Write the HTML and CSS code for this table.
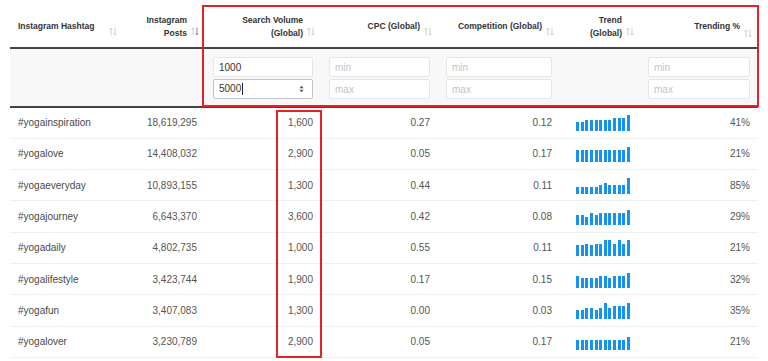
FILE: index.html
```html
<!DOCTYPE html>
<html lang="en">

<head>
    <meta charset="UTF-8" />
    <meta name="viewport" content="width=device-width, initial-scale=1.0" />
    <link rel="stylesheet" href="styles.css">
    <title>Instagram Hashtags</title>
</head>

<body>

    <div class="wrap">
        <table class="tbl">
            <colgroup>
                <col class="c-tag">
                <col class="c-posts">
                <col class="c-vol">
                <col class="c-cpc">
                <col class="c-comp">
                <col class="c-trend">
                <col class="c-pct">
            </colgroup>
            <thead>
                <tr class="head">
                    <th class="left">Instagram Hashtag<svg class="sort" viewBox="0 0 8 9"><path d="M2 8.5V1M0.5 2.5L2 1l1.5 1.5" /><path d="M6 0.5V8M4.5 6.5L6 8l1.5-1.5" /></svg></th>
                    <th>Instagram<br>Posts<svg class="sort desc" viewBox="0 0 8 9"><path d="M2 8.5V1M0.5 2.5L2 1l1.5 1.5" /><path class="on" d="M6 0.5V8M4.5 6.5L6 8l1.5-1.5" /></svg></th>
                    <th>Search Volume<br>(Global)<svg class="sort" viewBox="0 0 8 9"><path d="M2 8.5V1M0.5 2.5L2 1l1.5 1.5" /><path d="M6 0.5V8M4.5 6.5L6 8l1.5-1.5" /></svg></th>
                    <th>CPC (Global)<svg class="sort" viewBox="0 0 8 9"><path d="M2 8.5V1M0.5 2.5L2 1l1.5 1.5" /><path d="M6 0.5V8M4.5 6.5L6 8l1.5-1.5" /></svg></th>
                    <th>Competition (Global)<svg class="sort" viewBox="0 0 8 9"><path d="M2 8.5V1M0.5 2.5L2 1l1.5 1.5" /><path d="M6 0.5V8M4.5 6.5L6 8l1.5-1.5" /></svg></th>
                    <th>Trend<br>(Global)<svg class="sort" viewBox="0 0 8 9"><path d="M2 8.5V1M0.5 2.5L2 1l1.5 1.5" /><path d="M6 0.5V8M4.5 6.5L6 8l1.5-1.5" /></svg></th>
                    <th>Trending %<svg class="sort low" viewBox="0 0 8 9"><path d="M2 8.5V1M0.5 2.5L2 1l1.5 1.5" /><path d="M6 0.5V8M4.5 6.5L6 8l1.5-1.5" /></svg></th>
                </tr>
                <tr class="filters">
                    <td></td>
                    <td></td>
                    <td>
                        <input class="inp" value="1000">
                        <div class="inp focus">5000<span class="caret"></span>
                            <svg class="spin" viewBox="0 0 6 9"><path d="M0.5 3.5h5L3 0.5z" /><path d="M0.5 5.5h5L3 8.5z" /></svg>
                        </div>
                    </td>
                    <td><input class="inp" placeholder="min"><input class="inp" placeholder="max"></td>
                    <td><input class="inp" placeholder="min"><input class="inp" placeholder="max"></td>
                    <td></td>
                    <td><input class="inp" placeholder="min"><input class="inp" placeholder="max"></td>
                </tr>
            </thead>
            <tbody>
                <tr>
                    <td class="left">#yogainspiration</td>
                    <td>18,619,295</td>
                    <td>1,600</td>
                    <td>0.27</td>
                    <td>0.12</td>
                    <td class="trend"><div class="bars" data-h="9,9,11,11,11,11,11,11,13,13,13,16"></div></td>
                    <td>41%</td>
                </tr>
                <tr>
                    <td class="left">#yogalove</td>
                    <td>14,408,032</td>
                    <td>2,900</td>
                    <td>0.05</td>
                    <td>0.17</td>
                    <td class="trend"><div class="bars" data-h="12,12,12,12,12,12,12,12,12,12,12,15"></div></td>
                    <td>21%</td>
                </tr>
                <tr>
                    <td class="left">#yogaeveryday</td>
                    <td>10,893,155</td>
                    <td>1,300</td>
                    <td>0.44</td>
                    <td>0.11</td>
                    <td class="trend"><div class="bars" data-h="7,7,7,7,7,9,11,9,9,9,9,16"></div></td>
                    <td>85%</td>
                </tr>
                <tr>
                    <td class="left">#yogajourney</td>
                    <td>6,643,370</td>
                    <td>3,600</td>
                    <td>0.42</td>
                    <td>0.08</td>
                    <td class="trend"><div class="bars" data-h="10,10,8,12,10,12,12,12,12,12,12,15"></div></td>
                    <td>29%</td>
                </tr>
                <tr>
                    <td class="left">#yogadaily</td>
                    <td>4,802,735</td>
                    <td>1,000</td>
                    <td>0.55</td>
                    <td>0.11</td>
                    <td class="trend"><div class="bars" data-h="11,11,12,11,12,12,16,16,12,16,12,16"></div></td>
                    <td>21%</td>
                </tr>
                <tr>
                    <td class="left">#yogalifestyle</td>
                    <td>3,423,744</td>
                    <td>1,900</td>
                    <td>0.17</td>
                    <td>0.15</td>
                    <td class="trend"><div class="bars" data-h="12,10,10,10,10,12,12,10,12,12,12,15"></div></td>
                    <td>32%</td>
                </tr>
                <tr>
                    <td class="left">#yogafun</td>
                    <td>3,407,083</td>
                    <td>1,300</td>
                    <td>0.00</td>
                    <td>0.03</td>
                    <td class="trend"><div class="bars" data-h="9,9,11,11,9,11,16,11,13,13,13,16"></div></td>
                    <td>35%</td>
                </tr>
                <tr>
                    <td class="left">#yogalover</td>
                    <td>3,230,789</td>
                    <td>2,900</td>
                    <td>0.05</td>
                    <td>0.17</td>
                    <td class="trend"><div class="bars" data-h="10,10,10,10,10,10,10,10,10,10,10,13"></div></td>
                    <td>21%</td>
                </tr>
            </tbody>
        </table>

        <!-- red highlight boxes drawn over the table -->
        <div class="mark mark-filters"></div>
        <div class="mark mark-volume"></div>
    </div>

    <script>
        // build the little trend bar charts from the data-h lists
        document.querySelectorAll('.bars').forEach(box => {
            box.dataset.h.split(',').forEach(h => {
                const bar = document.createElement('span')
                bar.className = 'bar'
                bar.style.height = h + 'px'
                box.appendChild(bar)
            })
        })
    </script>

</body>

</html>
```

FILE: styles.css
```css
:root {
    --mark: #e5222a;
    --line-dark: #444;
    --line-light: #f0f0f0;
    --bar: #1592f2;
}

* {
    box-sizing: border-box;
}

body {
    margin: 0;
    background-color: #fff;
    font-family: 'Liberation Sans', Arial, sans-serif;
    color: #555;
}

.wrap {
    position: relative;
    /*so the red boxes can sit on top of the table*/
    padding: 0 10px;
}

.tbl {
    border-collapse: collapse;
    table-layout: fixed;
    width: 748px;
}

.c-tag { width: 113px; }
.c-posts { width: 82px; }
.c-vol { width: 116px; }
.c-cpc { width: 117px; }
.c-comp { width: 122px; }
.c-trend { width: 80px; }
.c-pct { width: 118px; }

/* header */
.head th {
    position: relative;
    height: 48px;
    padding: 12px 18px 6px 8px;
    text-align: right;
    vertical-align: middle;
    font-size: 8.5px;
    line-height: 13px;
    font-weight: bold;
    color: #333;
    border-bottom: 2px solid var(--line-dark);
}

.head th.left {
    text-align: left;
}

.sort {
    position: absolute;
    right: 6px;
    bottom: 11px;
    width: 8px;
    height: 9px;
    fill: none;
    stroke: #cfcfcf;
    stroke-width: 1;
}

.sort.low {
    bottom: 9px;
}

.sort .on {
    stroke: #888;
}

/* filter row */
.filters td {
    background-color: #f8f8f8;
    padding: 8px 8px 7px;
    border-bottom: 2px solid var(--line-dark);
    height: 57px;
    vertical-align: top;
}

.inp {
    display: block;
    width: 100%;
    height: 20px;
    margin: 0;
    padding: 0 5px;
    border: 1px solid #e6e6e6;
    border-radius: 2px;
    background-color: #fff;
    font-family: inherit;
    font-size: 10px;
    color: #333;
    outline: 0;
}

.inp + .inp {
    margin-top: 2px;
}

.inp::placeholder {
    color: #c4c4c4;
}

div.inp {
    display: flex;
    align-items: center;
    line-height: 18px;
}

.inp.focus {
    border-color: #c4c4c4;
}

.caret {
    width: 1px;
    height: 12px;
    background-color: #222;
    margin-left: 1px;
}

.spin {
    width: 5px;
    height: 8px;
    margin-left: auto;
    margin-right: 3px;
    fill: #555;
}

/* body rows */
tbody td {
    height: 31.3px;
    padding: 0 8px;
    text-align: right;
    font-size: 10px;
    color: #555;
    border-bottom: 1px solid var(--line-light);
    white-space: nowrap;
}

tbody td.left {
    text-align: left;
    color: #4a4a4a;
}

tbody td.trend {
    padding-left: 16px;
}

.bars {
    display: flex;
    align-items: flex-end;
    gap: 1.65px;
    height: 16px;
    margin-top: 1px;
}

.bar {
    width: 3px;
    background-color: var(--bar);
}

/* red highlight boxes */
.mark {
    position: absolute;
    border: 2px solid var(--mark);
    pointer-events: none;
}

.mark-filters {
    left: 202px;
    top: 5px;
    width: 557px;
    height: 102px;
}

.mark-volume {
    left: 276px;
    top: 110px;
    width: 46px;
    height: 248px;
}
```
